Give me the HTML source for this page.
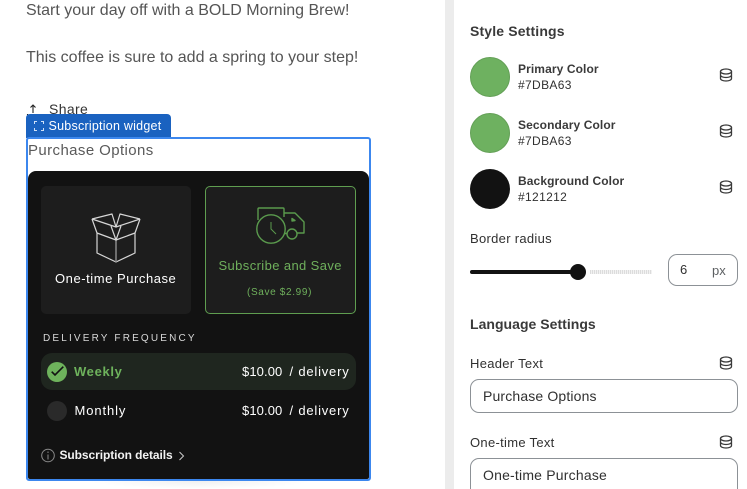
<!DOCTYPE html>
<html>
<head>
<meta charset="utf-8">
<style>
html,body{margin:0;padding:0;background:#fff;}
#p{position:relative;width:747px;height:489px;overflow:hidden;background:#fff;font-family:"Liberation Sans",sans-serif;}
#p>div,#p>svg{position:absolute;}
.t{white-space:nowrap;line-height:16px;}
.w{color:#fff;}
.db{width:14px;height:14px;}
.lab{font-size:12px;font-weight:bold;color:#3a3a3a;letter-spacing:.1px;}
.hex{font-size:12px;color:#303030;letter-spacing:.35px;}
.sw{width:40px;height:40px;border-radius:50%;box-sizing:border-box;}
.inp{box-sizing:border-box;border:1px solid #8c9196;border-radius:9px;background:#fff;}
.h{font-size:13px;color:#303030;letter-spacing:.3px;}
</style>
</head>
<body>
<div id="p">
<div class="t" style="left:26px;top:3px;font-size:16px;color:#555;letter-spacing:0;">Start your day off with a BOLD Morning Brew!</div>
<div class="t" style="left:26px;top:50px;font-size:16px;color:#555;letter-spacing:0;">This coffee is sure to add a spring to your step!</div>
<svg style="left:26px;top:103px" width="14" height="12" viewBox="0 0 14 12" fill="none" stroke="#222" stroke-width="1.100"><path d="M7 10V2M4.500 4.500L7 2l2.500 2.500M1.500 11v1M12.500 11v1"/></svg>
<div class="t" style="left:49px;top:101px;font-size:14px;color:#333;letter-spacing:.35px;">Share</div>

<div style="left:26px;top:114px;width:145px;height:24px;background:#1a62c0;border-radius:4px 4px 0 0;"></div>
<svg style="left:34px;top:121px" width="10" height="10" viewBox="0 0 10 10" fill="none" stroke="#cfe0f7" stroke-width="1"><path d="M.5 3V.500H3M7 .500h2.500V3M9.500 7v2.500H7M3 9.500H.500V7"/></svg>
<div class="t" style="left:48.500px;top:118px;font-size:12.500px;color:#fff;letter-spacing:.24px;">Subscription widget</div>

<div style="left:26px;top:137px;width:345px;height:344px;box-sizing:border-box;border:2px solid #3c87ee;border-radius:3px;"></div>
<div class="t" style="left:28px;top:143px;font-size:15px;color:#5a5a5a;letter-spacing:.4px;">Purchase Options</div>

<div style="left:28px;top:171px;width:341px;height:308px;background:#121212;border-radius:8px 8px 2px 2px;"></div>

<div style="left:41px;top:186px;width:150px;height:128px;background:#1d1d1d;border-radius:5px;"></div>
<svg style="left:91px;top:212px" width="50" height="52" viewBox="0 0 50 52" fill="none" stroke="#d6d6d6" stroke-width="1.200" stroke-linejoin="round">
<path d="M1 7L6 21V41L25 50L44 41V21L49 7"/>
<path d="M25 28V50" stroke="#8a8a8a" stroke-width="1.500"/>
<path d="M6 21L25 28L44 21"/>
<path d="M1 7L21 2L25 15L1 7M49 7L29 2L25 15L49 7M20 14L25 28L30 14"/>
</svg>
<div class="t w" style="left:55px;top:271px;font-size:13px;letter-spacing:.55px;">One-time Purchase</div>

<div style="left:205px;top:186px;width:151px;height:128px;box-sizing:border-box;background:#1d1d1d;border:1px solid #5f9e50;border-radius:5px;"></div>
<svg style="left:255px;top:207px" width="50" height="38" viewBox="0 0 50 38" fill="none" stroke="#5a9a4d" stroke-width="1.400" stroke-linejoin="round">
<path d="M3 13V2Q3 1 4 1H28Q29 1 29 2V10"/>
<path d="M29 6H40L49 15V26H42M30 26.500H32"/>
<path d="M40 13.500L37 11.500V14Z" fill="#5a9a4d"/>
<circle cx="16" cy="22" r="14.200"/>
<path d="M16 15V22L21 27" stroke-width="1"/>
<circle cx="37" cy="27" r="5"/>
</svg>
<div class="t" style="left:218.500px;top:258px;font-size:13px;color:#6fb05c;letter-spacing:.39px;">Subscribe and Save</div>
<div class="t" style="left:247px;top:285px;font-size:10px;color:#6fb05c;letter-spacing:.65px;">(Save $2.99)</div>

<div class="t" style="left:43px;top:331px;font-size:10px;color:#d8d8d8;letter-spacing:2.170px;">DELIVERY FREQUENCY</div>

<div style="left:41px;top:353px;width:315px;height:37px;background:#1f261f;border-radius:11px;"></div>
<svg style="left:47px;top:362px" width="20" height="20" viewBox="0 0 20 20"><circle cx="10" cy="10" r="10" fill="#6eb35c"/><path d="M4.700 9.700L8 13L16.300 4.700" fill="none" stroke="#121212" stroke-width="1.600"/></svg>
<div class="t" style="left:74px;top:363.500px;font-size:13px;font-weight:bold;color:#6eb35c;letter-spacing:.65px;">Weekly</div>
<div class="t w" style="left:242px;top:364px;font-size:13px;letter-spacing:.1px;">$10.00</div>
<div class="t w" style="left:289.500px;top:364px;font-size:13px;letter-spacing:.8px;">/ delivery</div>

<div style="left:47px;top:401px;width:20px;height:20px;background:#2a2a2a;border-radius:50%;"></div>
<div class="t w" style="left:74.500px;top:403px;font-size:13px;letter-spacing:.9px;">Monthly</div>
<div class="t w" style="left:242px;top:403px;font-size:13px;letter-spacing:.1px;">$10.00</div>
<div class="t w" style="left:289.500px;top:403px;font-size:13px;letter-spacing:.8px;">/ delivery</div>

<svg style="left:41px;top:448px" width="14" height="15" viewBox="0 0 14 15" fill="none" stroke="#8a8a8a" stroke-width="1"><circle cx="7" cy="7.500" r="6.300"/><path d="M7 6.500V11.500M7 3.500V5"/></svg>
<div class="t" style="left:59.500px;top:447px;font-size:12px;font-weight:bold;color:#f2f2f2;letter-spacing:-.08px;">Subscription details</div>
<svg style="left:178px;top:451px" width="8" height="10" viewBox="0 0 8 10" fill="none" stroke="#ccc" stroke-width="1"><path d="M1.500 1L5.500 5L1.500 9"/></svg>

<div style="left:90px;top:481px;width:220px;height:8px;background:radial-gradient(ellipse 50% 100% at 50% 0,#f0f0f0,#fff);"></div>

<div style="left:445px;top:0;width:9px;height:489px;background:#ececec;"></div>

<div class="t" style="left:470px;top:23px;font-size:14px;font-weight:bold;color:#3a3a3a;letter-spacing:.15px;">Style Settings</div>

<div class="sw" style="left:470px;top:57px;background:#6eb160;border:1px solid #64a057;"></div>
<div class="t lab" style="left:518px;top:61px;">Primary Color</div>
<div class="t hex" style="left:518px;top:77px;">#7DBA63</div>
<svg class="db" style="left:719px;top:68px" viewBox="0 0 14 14" fill="none" stroke="#3a3a3a" stroke-width="1.300"><ellipse cx="7" cy="3.500" rx="5.500" ry="2.500"/><path d="M1.500 3.500V10.500C1.500 12 4 13 7 13S12.500 12 12.500 10.500V3.500M1.500 7C1.500 8.500 4 9.500 7 9.500S12.500 8.500 12.500 7"/></svg>

<div class="sw" style="left:470px;top:113px;background:#6eb160;border:1px solid #64a057;"></div>
<div class="t lab" style="left:518px;top:117px;">Secondary Color</div>
<div class="t hex" style="left:518px;top:133px;">#7DBA63</div>
<svg class="db" style="left:719px;top:124px" viewBox="0 0 14 14" fill="none" stroke="#3a3a3a" stroke-width="1.300"><ellipse cx="7" cy="3.500" rx="5.500" ry="2.500"/><path d="M1.500 3.500V10.500C1.500 12 4 13 7 13S12.500 12 12.500 10.500V3.500M1.500 7C1.500 8.500 4 9.500 7 9.500S12.500 8.500 12.500 7"/></svg>

<div class="sw" style="left:470px;top:169px;background:#121212;"></div>
<div class="t lab" style="left:518px;top:173px;">Background Color</div>
<div class="t hex" style="left:518px;top:189px;">#121212</div>
<svg class="db" style="left:719px;top:180px" viewBox="0 0 14 14" fill="none" stroke="#3a3a3a" stroke-width="1.300"><ellipse cx="7" cy="3.500" rx="5.500" ry="2.500"/><path d="M1.500 3.500V10.500C1.500 12 4 13 7 13S12.500 12 12.500 10.500V3.500M1.500 7C1.500 8.500 4 9.500 7 9.500S12.500 8.500 12.500 7"/></svg>

<div class="t h" style="left:470px;top:231px;">Border radius</div>
<div style="left:470px;top:270px;width:108px;height:4px;background:#121212;border-radius:2px;"></div>
<div style="left:590px;top:270px;width:62px;height:4px;background:repeating-linear-gradient(90deg,#dcdcdc 0 1px,#f2f2f2 1px 2px);"></div>
<div style="left:570px;top:264px;width:16px;height:16px;background:#121212;border-radius:50%;"></div>
<div class="inp" style="left:668px;top:254px;width:70px;height:32px;"></div>
<div class="t" style="left:680px;top:262px;font-size:13px;color:#303030;">6</div>
<div class="t" style="left:712px;top:263px;font-size:13px;color:#5c5f62;">px</div>

<div class="t" style="left:470px;top:316px;font-size:14px;font-weight:bold;color:#3a3a3a;letter-spacing:.03px;">Language Settings</div>

<div class="t h" style="left:470px;top:356px;">Header Text</div>
<svg class="db" style="left:719px;top:356px" viewBox="0 0 14 14" fill="none" stroke="#3a3a3a" stroke-width="1.300"><ellipse cx="7" cy="3.500" rx="5.500" ry="2.500"/><path d="M1.500 3.500V10.500C1.500 12 4 13 7 13S12.500 12 12.500 10.500V3.500M1.500 7C1.500 8.500 4 9.500 7 9.500S12.500 8.500 12.500 7"/></svg>
<div class="inp" style="left:470px;top:379px;width:268px;height:34px;"></div>
<div class="t" style="left:483px;top:388px;font-size:14px;color:#303030;letter-spacing:.15px;">Purchase Options</div>

<div class="t h" style="left:470px;top:435px;">One-time Text</div>
<svg class="db" style="left:719px;top:435px" viewBox="0 0 14 14" fill="none" stroke="#3a3a3a" stroke-width="1.300"><ellipse cx="7" cy="3.500" rx="5.500" ry="2.500"/><path d="M1.500 3.500V10.500C1.500 12 4 13 7 13S12.500 12 12.500 10.500V3.500M1.500 7C1.500 8.500 4 9.500 7 9.500S12.500 8.500 12.500 7"/></svg>
<div class="inp" style="left:470px;top:458px;width:268px;height:40px;"></div>
<div class="t" style="left:483px;top:467px;font-size:14px;color:#303030;letter-spacing:.2px;">One-time Purchase</div>
</div>
</body>
</html>
